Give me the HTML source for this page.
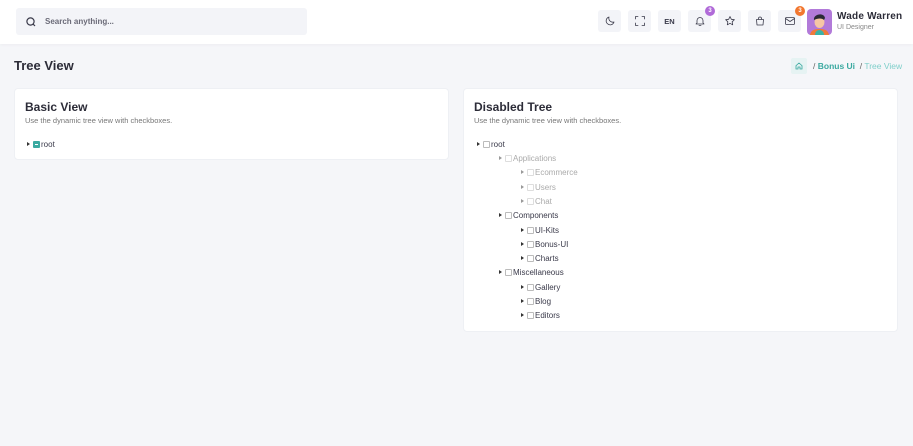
<!DOCTYPE html>
<html><head><meta charset="utf-8"><style>
*{box-sizing:border-box;margin:0;padding:0}
body{width:913px;height:446px;background:#f5f6f9;font-family:"Liberation Sans",sans-serif;position:relative;overflow:hidden;color:#3a3a4a}
.hdr{position:absolute;left:0;top:0;width:913px;height:44px;background:#fff;box-shadow:0 1px 3px rgba(0,0,0,.04)}
.search{position:absolute;left:16px;top:8px;width:291px;height:27px;background:#f3f4f8;border-radius:3px}
.search span{position:absolute;left:29px;top:9px;font-size:8px;font-weight:bold;color:#6b6b78}
.ib{position:absolute;top:10px;width:23px;height:22px;background:#f3f4f8;border-radius:3px;display:flex;align-items:center;justify-content:center}
.ib svg{width:12px;height:12px;fill:none;stroke:#3a3a4a;stroke-width:1.6;stroke-linecap:round;stroke-linejoin:round}
.badge{position:absolute;top:-4px;right:-4px;width:10px;height:10px;border-radius:50%;color:#fff;font-size:6px;font-weight:bold;text-align:center;line-height:10px}
.card{position:absolute;background:#fff;border-radius:4px;border:1px solid #eef0f4}
h2{position:absolute;font-size:12px;font-weight:bold;color:#2c2c38}
.sub{position:absolute;font-size:7.5px;color:#777}
.row{position:absolute;font-size:8px;color:#3a3a4a;height:10px;display:flex;align-items:center}
.row i{display:inline-block;width:0;height:0;border-left:3px solid #333;border-top:2.5px solid transparent;border-bottom:2.5px solid transparent;margin-right:3px}
.row b{display:inline-block;width:7px;height:7px;border:1px solid #bbb;border-radius:1px;margin-right:1px}
.row.d{color:#aaa}.row.d b{border-color:#ddd}.row.d i{border-left-color:#999}
</style></head><body>
<div class="hdr">
 <div class="search"><svg style="position:absolute;left:10px;top:9px" width="10" height="10" viewBox="0 0 10 10"><circle cx="4.5" cy="4.5" r="3.6" fill="none" stroke="#3a3a4a" stroke-width="1.2"/><path d="M7.2 7.2L9 9" stroke="#3a3a4a" stroke-width="1.2"/></svg><span>Search anything...</span></div>
 <div class="ib" style="left:598px"><svg viewBox="0 0 24 24"><path d="M20 14A8 8 0 0 1 10 4a8 8 0 1 0 10 10z"/></svg></div>
 <div class="ib" style="left:628px"><svg viewBox="0 0 24 24"><path d="M3 8V3h5M16 3h5v5M21 16v5h-5M8 21H3v-5"/></svg></div>
 <div class="ib" style="left:658px;font-size:7.5px;font-weight:bold">EN</div>
 <div class="ib" style="left:688px"><svg viewBox="0 0 24 24"><path d="M6 16V11a6 6 0 0 1 12 0v5l2 2H4z M10 21h4"/></svg><div class="badge" style="background:#b06ad8">3</div></div>
 <div class="ib" style="left:718px"><svg viewBox="0 0 24 24"><path d="M12 3l2.7 5.6 6 .8-4.4 4.2 1.1 6-5.4-3-5.4 3 1.1-6L3.3 9.4l6-.8z"/></svg></div>
 <div class="ib" style="left:748px"><svg viewBox="0 0 24 24"><path d="M5 9h14l-1 11H6z M9 9V7a3 3 0 0 1 6 0v2"/></svg></div>
 <div class="ib" style="left:778px"><svg viewBox="0 0 24 24"><rect x="3" y="5" width="18" height="14" rx="2"/><path d="M3 7l9 6 9-6"/></svg><div class="badge" style="background:#f2762e">3</div></div>
 <svg style="position:absolute;left:807px;top:9px" width="25" height="26" viewBox="0 0 25 26"><rect width="25" height="26" rx="4" fill="#b27ad9"/><path d="M3 26c1-5 4-6 9.5-6s8.5 1 9.5 6z" fill="#f07a3a"/><path d="M8 26c0-3 2-5 4.5-5s4.5 2 4.5 5z" fill="#3ab3a8"/><ellipse cx="12.5" cy="13" rx="5" ry="6" fill="#f6c7a4"/><path d="M7 11c-1-6 10-8 11-2l-1 2c-2-2-6-2-10 0z" fill="#2a2a35"/></svg>
 <div style="position:absolute;left:837px;top:11px;font-size:10px;font-weight:bold;color:#2c2c38;letter-spacing:.2px">Wade Warren</div>
 <div style="position:absolute;left:837px;top:24px;font-size:7px;color:#888">UI Designer</div>
</div>
<div style="position:absolute;left:14px;top:58px;font-size:13px;font-weight:bold;color:#2c2c38">Tree View</div>
<div style="position:absolute;left:791px;top:58px;width:16px;height:16px;background:#e6f3f3;border-radius:2px"><svg style="position:absolute;left:4px;top:4px" width="8" height="8" viewBox="0 0 24 24"><path d="M3 11l9-8 9 8v10h-6v-6h-6v6H3z" fill="none" stroke="#3aa9a0" stroke-width="2.5"/></svg></div>
<div style="position:absolute;left:813px;top:61px;font-size:8.5px;color:#666">/ <span style="color:#3aa9a0;font-weight:bold">Bonus Ui</span> &nbsp;/ <span style="color:#7fcfca">Tree View</span></div>

<div class="card" style="left:14px;top:88px;width:435px;height:72px">
 <h2 style="left:10px;top:11px">Basic View</h2>
 <div class="sub" style="left:10px;top:27px">Use the dynamic tree view with checkboxes.</div>
 <div class="row" style="left:12px;top:50px"><i></i><b style="background:#3aa9a0;border-color:#3aa9a0;position:relative"><span style="position:absolute;left:1px;top:2px;width:3px;height:1px;background:#fff"></span></b>root</div>
</div>

<div class="card" style="left:463px;top:88px;width:435px;height:244px">
 <h2 style="left:10px;top:11px">Disabled Tree</h2>
 <div class="sub" style="left:10px;top:27px">Use the dynamic tree view with checkboxes.</div>
 <div class="row" style="left:13px;top:50px"><i></i><b></b>root</div>
 <div class="row d" style="left:35px;top:64px"><i></i><b></b>Applications</div>
 <div class="row d" style="left:57px;top:78px"><i></i><b></b>Ecommerce</div>
 <div class="row d" style="left:57px;top:93px"><i></i><b></b>Users</div>
 <div class="row d" style="left:57px;top:107px"><i></i><b></b>Chat</div>
 <div class="row" style="left:35px;top:121px"><i></i><b></b>Components</div>
 <div class="row" style="left:57px;top:136px"><i></i><b></b>UI-Kits</div>
 <div class="row" style="left:57px;top:150px"><i></i><b></b>Bonus-UI</div>
 <div class="row" style="left:57px;top:164px"><i></i><b></b>Charts</div>
 <div class="row" style="left:35px;top:178px"><i></i><b></b>Miscellaneous</div>
 <div class="row" style="left:57px;top:193px"><i></i><b></b>Gallery</div>
 <div class="row" style="left:57px;top:207px"><i></i><b></b>Blog</div>
 <div class="row" style="left:57px;top:221px"><i></i><b></b>Editors</div>
</div>
</body></html>
